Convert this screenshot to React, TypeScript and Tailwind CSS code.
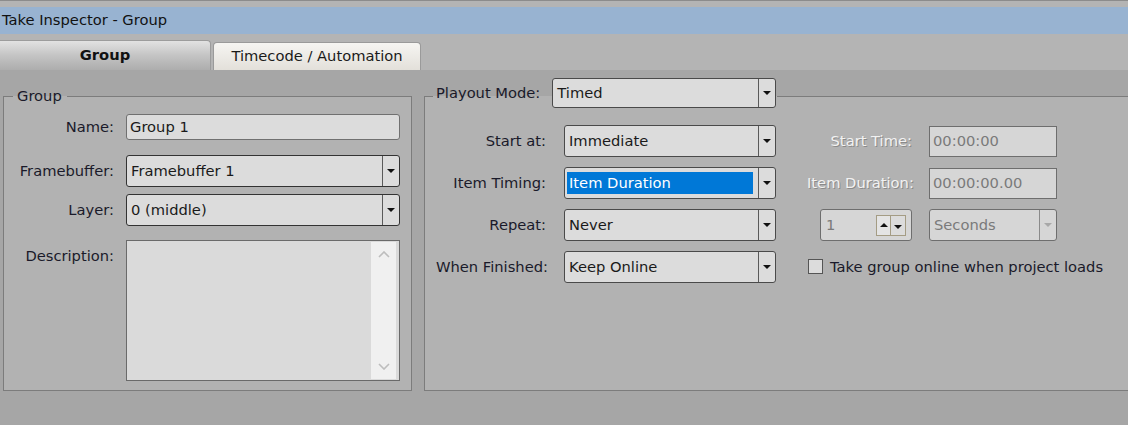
import React from "react";

const font = "font-['DejaVu_Sans',sans-serif] text-[14.7px]";

const Arrow = ({ dim }: { dim?: boolean }) => (
  <span
    className={
      dim
        ? "block h-0 w-0 border-x-[4px] border-t-[4px] border-x-transparent border-t-[#a8a8a8]"
        : "block h-0 w-0 border-x-[4px] border-t-[4px] border-x-transparent border-t-[#111]"
    }
  />
);

const Combo = ({
  value,
  className,
  selected,
  disabled,
}: {
  value: string;
  className: string;
  selected?: boolean;
  disabled?: boolean;
}) => (
  <div
    className={`flex rounded-[3px] border ${
      disabled ? "border-[#6e6e6e] bg-[#d6d6d6]" : "border-[#4a4a4a] bg-[#dcdcdc]"
    } ${className}`}
  >
    <div className="flex flex-1 items-center py-[4px] pl-[2px] pr-[5px]">
      <span
        className={`flex h-full w-full items-center px-[2px] ${
          selected ? "bg-[#0078d7] text-white" : disabled ? "text-[#7a7a7a]" : "text-[#1a1a1a]"
        }`}
      >
        {value}
      </span>
    </div>
    <div className={`flex w-[17px] items-center justify-center border-l ${disabled ? "border-[#8a8a8a]" : "border-[#5a5a5a]"}`}>
      <Arrow dim={disabled} />
    </div>
  </div>
);

const Label = ({ children, className }: { children: React.ReactNode; className: string }) => (
  <div className={`whitespace-nowrap text-right text-[#1a1a2a] ${className}`}>{children}</div>
);

const Embossed = ({ children }: { children: React.ReactNode }) => (
  <div className="w-[105px] whitespace-nowrap text-right text-[#f2f2f2] [text-shadow:1px_1px_0_#8a8a8a]">{children}</div>
);

const TimeField = ({ value }: { value: string }) => (
  <div className="ml-[17px] flex h-[31px] w-[128px] items-center border border-[#6e6e6e] bg-[#d6d6d6] px-[3px] text-[#7a7a7a]">
    {value}
  </div>
);

export default function App() {
  return (
    <div className={`flex h-[425px] w-full flex-col overflow-hidden bg-[#a6a6a6] ${font}`}>
      {/* top strip */}
      <div className="h-[7px] border-t border-[#8c8c8c] bg-[#b4b4b4]" />

      {/* title */}
      <div className="flex h-[27px] items-center bg-[#98b3d1] pl-[2px] text-[#111]">Take Inspector - Group</div>

      {/* tabs */}
      <div className="flex h-[36px] items-end gap-[2px] bg-[#b4b4b4]">
        <div className="flex h-[30px] w-[211px] items-center justify-center rounded-tr-[4px] border-t border-r border-[#9c9c9c] bg-gradient-to-b from-[#e2e2e2] via-[#c4c4c4] to-[#adadad] font-bold text-[#111]">
          Group
        </div>
        <div className="flex h-[28px] w-[208px] items-center justify-center rounded-t-[4px] border border-b-0 border-[#9a9a9a] bg-gradient-to-b from-[#f6f5f2] to-[#e3e0da] text-[#1a1a1a]">
          Timecode / Automation
        </div>
      </div>

      {/* pane */}
      <div className="flex flex-1 items-start gap-[12px] pl-[3px]">
        {/* left group */}
        <fieldset className="mt-[16px] h-[305px] w-[409px] border border-[#7c7c7c] bg-[#b2b2b2] pb-[8px]">
          <legend className="ml-[9px] px-[4px] pr-[5px] leading-[20px] text-[#1a1a2a]">Group</legend>
          <div className="flex flex-col pt-[8px]">
            <div className="flex items-center">
              <Label className="w-[110px]">Name:</Label>
              <div className="ml-[12px] flex h-[26px] w-[274px] items-center rounded-[3px] border border-[#707070] bg-[#dcdcdc] px-[3px] text-[#1a1a1a]">
                Group 1
              </div>
            </div>
            <div className="mt-[15px] flex items-center">
              <Label className="w-[110px]">Framebuffer:</Label>
              <Combo value="Framebuffer 1" className="ml-[12px] h-[32px] w-[274px] border-[#333]" />
            </div>
            <div className="mt-[7px] flex items-center">
              <Label className="w-[110px]">Layer:</Label>
              <Combo value="0 (middle)" className="ml-[12px] h-[32px] w-[274px] border-[#333]" />
            </div>
            <div className="mt-[14px] flex items-start">
              <Label className="mt-[5px] w-[110px]">Description:</Label>
              <div className="ml-[12px] flex h-[141px] w-[274px] border border-[#6a6a6a] bg-[#dadada]">
                <div className="flex-1" />
                <div className="my-px mr-[3px] flex w-[25px] flex-col items-center justify-between bg-[#f0f0f0] py-[9px]">
                  <svg width="12" height="7" viewBox="0 0 12 7">
                    <path d="M1 6 L6 1 L11 6" fill="none" stroke="#bdbdbd" strokeWidth="1.6" />
                  </svg>
                  <svg width="12" height="7" viewBox="0 0 12 7">
                    <path d="M1 1 L6 6 L11 1" fill="none" stroke="#bdbdbd" strokeWidth="1.6" />
                  </svg>
                </div>
              </div>
            </div>
          </div>
        </fieldset>

        {/* right group */}
        <fieldset className="mt-[8px] mr-[-4px] h-[313px] flex-1 border border-[#7c7c7c] bg-[#b2b2b2]">
          <legend className="ml-[8px] flex h-[36px] items-start pl-[3px] pr-px">
            <div className="flex h-[30px] items-center text-[#1a1a2a]">
              <span>Playout Mode:</span>
              <Combo value="Timed" className="ml-[12px] h-[30px] w-[224px]" />
            </div>
          </legend>
          <div className="flex flex-col gap-[10px] pl-[11px] pt-[11px]">
            <div className="flex h-[32px] items-center">
              <Label className="w-[110px]">Start at:</Label>
              <Combo value="Immediate" className="ml-[18px] h-[32px] w-[212px]" />
              <div className="ml-[31px]">
                <Embossed>Start Time:</Embossed>
              </div>
              <TimeField value="00:00:00" />
            </div>
            <div className="flex h-[32px] items-center">
              <Label className="w-[110px]">Item Timing:</Label>
              <Combo value="Item Duration" selected className="ml-[18px] h-[32px] w-[212px]" />
              <div className="ml-[31px]">
                <Embossed>Item Duration:</Embossed>
              </div>
              <TimeField value="00:00:00.00" />
            </div>
            <div className="flex h-[32px] items-center">
              <Label className="w-[110px]">Repeat:</Label>
              <Combo value="Never" className="ml-[18px] h-[32px] w-[212px]" />
              <div className="ml-[44px] flex h-[32px] w-[92px] items-center justify-between rounded-[3px] border border-[#6e6e6e] bg-[#d6d6d6] pl-[5px] pr-[5px]">
                <span className="text-[#7a7a7a]">1</span>
                <div className="flex h-[21px] border border-[#a49c84]">
                  <div className="flex w-[14px] items-center justify-center border-r border-[#a49c84] bg-[#e4e4e4]">
                    <span className="block h-0 w-0 border-x-[4px] border-b-[4px] border-x-transparent border-b-[#111]" />
                  </div>
                  <div className="flex w-[14px] items-center justify-center bg-[#dcdcdc] pt-[3px]">
                    <Arrow />
                  </div>
                </div>
              </div>
              <Combo value="Seconds" disabled className="ml-[17px] h-[32px] w-[128px]" />
            </div>
            <div className="flex h-[32px] items-center">
              <Label className="w-[110px]">When Finished:</Label>
              <Combo value="Keep Online" className="ml-[18px] h-[32px] w-[212px]" />
              <div className="ml-[32px] flex items-center">
                <span className="h-[15px] w-[15px] border border-[#555] bg-[#dcdcdc]" />
                <span className="ml-[7px] text-[#1a1a2a]">Take group online when project loads</span>
              </div>
            </div>
          </div>
        </fieldset>
      </div>
    </div>
  );
}
